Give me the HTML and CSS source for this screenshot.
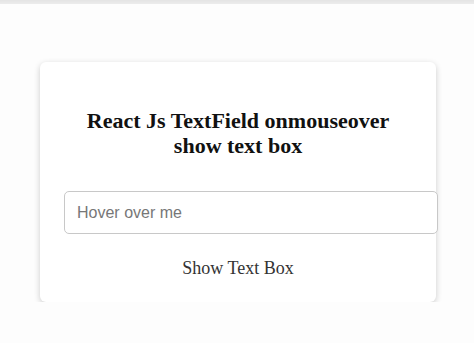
FILE: index.html
```html
<!DOCTYPE html>
<html lang="en">
<head>
  <meta charset="UTF-8" />
  <meta name="viewport" content="width=device-width, initial-scale=1.0"/>
  <title>React Js TextField onmouseover show text box</title>
  <link rel="stylesheet" href="styles.css">
</head>
<body>
  <div class="top-bar"></div>
  <div class="card">
    <h2>React Js TextField onmouseover show text box</h2>
    <input type="text" class="hover-input" placeholder="Hover over me">
    <p class="show-text">Show Text Box</p>
  </div>
</body>
</html>
```
FILE: styles.css
```css
body {
  margin: 0;
  background-color: #fdfdfd;
  font-family: 'Liberation Serif', 'Times New Roman', serif;
}

.top-bar {
  height: 4px;
  background: linear-gradient(#e4e4e4, #ececec);
}

.card {
  width: 348px;
  margin: 58px 0 0 40px;
  padding: 0 24px;
  background-color: #fff;
  border-radius: 6px;
  box-shadow: 0 2px 6px rgba(0, 0, 0, 0.2);
  text-align: center;
}

.card h2 {
  margin: 0;
  padding: 46px 0 33px;
  font-size: 22px;
  line-height: 25px;
  color: #111;
}

.hover-input {
  display: block;
  width: 100%;
  height: 41px;
  padding: 0 12px;
  border: 1px solid #c8c8c8;
  border-radius: 5px;
  font-family: 'Liberation Sans', Arial, sans-serif;
  font-size: 16px;
  color: #333;
  background: #fff;
}

.hover-input::placeholder {
  color: #777;
}

.show-text {
  margin: 0;
  padding: 24px 0 23px;
  font-size: 18px;
  line-height: 21px;
  color: #333;
}
```
